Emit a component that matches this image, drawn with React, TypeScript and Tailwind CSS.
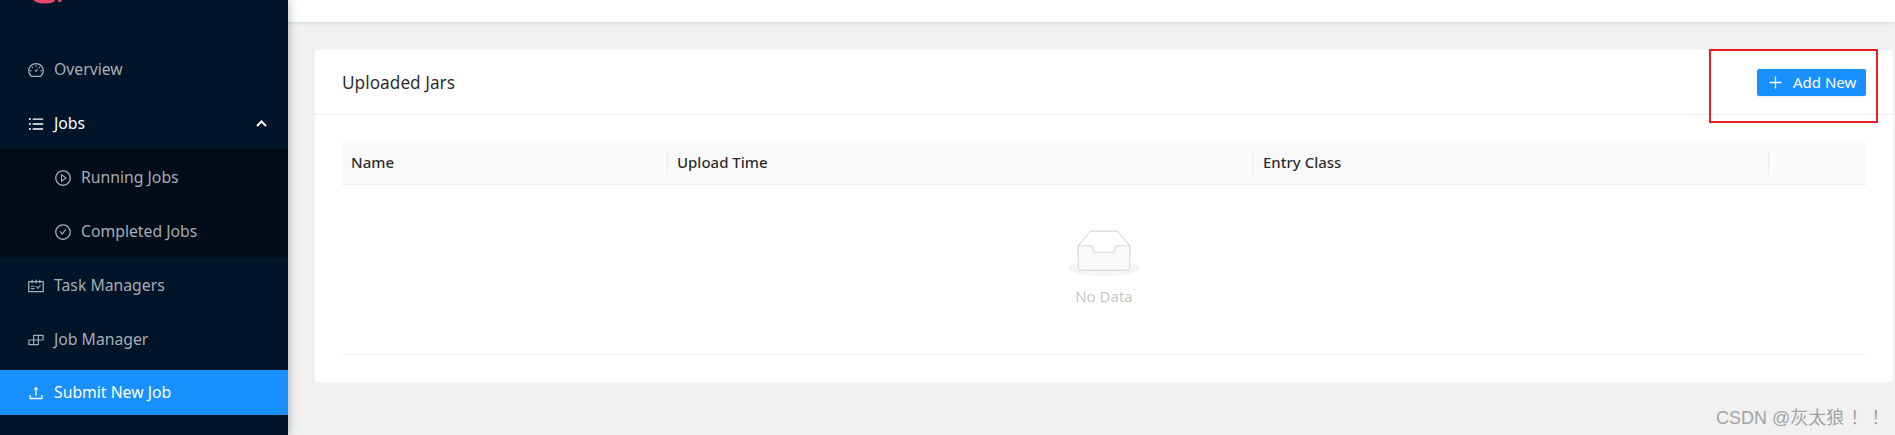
import {
  AiOutlineDashboard,
  AiOutlineUnorderedList,
  AiOutlinePlayCircle,
  AiOutlineCheckCircle,
  AiOutlineSchedule,
  AiOutlineBuild,
  AiOutlineUpload,
  AiOutlinePlus,
} from "react-icons/ai";
import type { ReactNode } from "react";

function Row({ icon, label, cls, sub }: { icon: ReactNode; label: string; cls?: string; sub?: boolean }) {
  return (
    <div className={`flex h-[45px] items-center text-[15.75px] ${sub ? "pl-[54px]" : "pl-[27px]"} ${cls ?? "text-[#a6adb4]"}`}>
      <span className="mr-[9px] flex w-[18px] shrink-0 justify-center text-[18px]">{icon}</span>
      <span>{label}</span>
    </div>
  );
}

function EmptyIcon() {
  return (
    <svg width="72" height="46" viewBox="0 0 64 41">
      <g transform="translate(0 1)" fill="none" fillRule="evenodd">
        <ellipse fill="#f5f5f5" cx="32" cy="33" rx="32" ry="7" />
        <g fillRule="nonzero" stroke="#d9d9d9">
          <path d="M55 12.76L44.854 1.258C44.367.474 43.656 0 42.907 0H21.093c-.749 0-1.46.474-1.947 1.257L9 12.761V22h46v-9.24z" />
          <path
            d="M41.613 15.931c0-1.605.994-2.93 2.227-2.931H55v18.137C55 33.26 53.68 35 52.05 35h-40.1C10.32 35 9 33.259 9 31.137V13h11.16c1.233 0 2.227 1.323 2.227 2.928v.022c0 1.605 1.005 2.901 2.237 2.901h14.752c1.232 0 2.237-1.308 2.237-2.913v-.007z"
            fill="#fafafa"
          />
        </g>
      </g>
    </svg>
  );
}

function HeaderCell({ label, divider }: { label: string; divider?: boolean }) {
  return (
    <div className="relative flex items-center pl-[9px] font-medium">
      {label}
      {divider && <span className="absolute right-0 top-[9px] h-[25px] w-px bg-[#ececec]" />}
    </div>
  );
}

export default function App() {
  return (
    <div className="relative flex h-[435px] w-[1895px] overflow-hidden bg-[#f1f1f1] font-['Noto_Sans',sans-serif]">
      <aside className="z-10 flex w-[288px] shrink-0 flex-col bg-[#001529] shadow-[2px_0_8px_rgba(29,35,41,0.25)]">
        <div className="h-[47px] pl-[33px]">
          <svg width="30" height="4" viewBox="0 0 30 4" className="block">
            <path d="M0 0 H22 L21 2 Q16 4 8 3.5 Q3 3 0 0Z" fill="#e6476b" />
            <path d="M25 0 H29 L28 2 H25Z" fill="#e6476b" />
          </svg>
        </div>
        <nav className="flex flex-col">
          <Row icon={<AiOutlineDashboard />} label="Overview" />
          <div className="mt-[9px] flex h-[45px] items-center justify-between pl-[27px] pr-[21px] text-[15.75px] text-white">
            <div className="flex items-center">
              <span className="mr-[9px] flex w-[18px] justify-center text-[18px]">
                <AiOutlineUnorderedList />
              </span>
              <span>Jobs</span>
            </div>
            <svg width="11" height="7" viewBox="0 0 11 7" fill="none" stroke="white" strokeWidth="2">
              <path d="M1 6 L5.5 1.5 L10 6" />
            </svg>
          </div>
          <div className="mt-[3px] flex h-[108px] flex-col gap-[9px] bg-[#000c17] pt-[6px]">
            <Row sub icon={<AiOutlinePlayCircle />} label="Running Jobs" />
            <Row sub icon={<AiOutlineCheckCircle />} label="Completed Jobs" />
          </div>
          <div className="mt-[6px]">
            <Row icon={<AiOutlineSchedule />} label="Task Managers" />
          </div>
          <div className="mt-[9px]">
            <Row icon={<AiOutlineBuild />} label="Job Manager" />
          </div>
          <div className="mt-[8px] bg-[#1890ff]">
            <Row icon={<AiOutlineUpload />} label="Submit New Job" cls="text-white" />
          </div>
        </nav>
      </aside>
      <main className="flex min-w-0 flex-1 flex-col">
        <div className="h-[22px] shrink-0 bg-white shadow-[0_1px_4px_rgba(0,21,41,0.12)]" />
        <section className="ml-[27px] mr-[2px] mt-[28px] h-[332px] rounded-[2px] bg-white text-[#000000d9]">
          <div className="flex h-[65px] items-center justify-between border-b border-[#eeeeee] pl-[27px] pr-[27px]">
            <h2 className="mt-[1px] text-[17.25px] font-normal">Uploaded Jars</h2>
            <button className="flex h-[27px] w-[109px] items-center rounded-[2px] bg-[#1890ff] pl-[10px] text-[15px] text-white shadow-[0_2px_0_rgba(0,0,0,0.045)]">
              <AiOutlinePlus className="text-[17px]" />
              <span className="ml-[9px]">Add New</span>
            </button>
          </div>
          <div className="px-[27px] pt-[26px]">
            <div className="grid h-[44px] grid-cols-[326px_586px_515px_1fr] border-b border-[#eeeeee] bg-[#fafafa] text-[15px]">
              <HeaderCell label="Name" divider />
              <HeaderCell label="Upload Time" divider />
              <HeaderCell label="Entry Class" divider />
              <div />
            </div>
            <div className="flex h-[170px] flex-col items-center border-b border-[#eeeeee] pt-[45px]">
              <EmptyIcon />
              <p className="mt-[9px] text-[15px] text-[#00000040]">No Data</p>
            </div>
          </div>
        </section>
      </main>
      <div className="absolute left-[1709px] top-[49px] h-[74px] w-[169px] border-2 border-[#ed1c24]" />
      <div className="absolute left-[1716px] top-[405px] flex font-['Liberation_Sans','Noto_Sans_CJK_SC',sans-serif] text-[18px] text-[#a3a3a3]">
        <span>CSDN @灰太狼</span>
        <span className="ml-[6px] w-[21px]">！</span>
        <span className="w-[18px]">！</span>
      </div>
    </div>
  );
}
